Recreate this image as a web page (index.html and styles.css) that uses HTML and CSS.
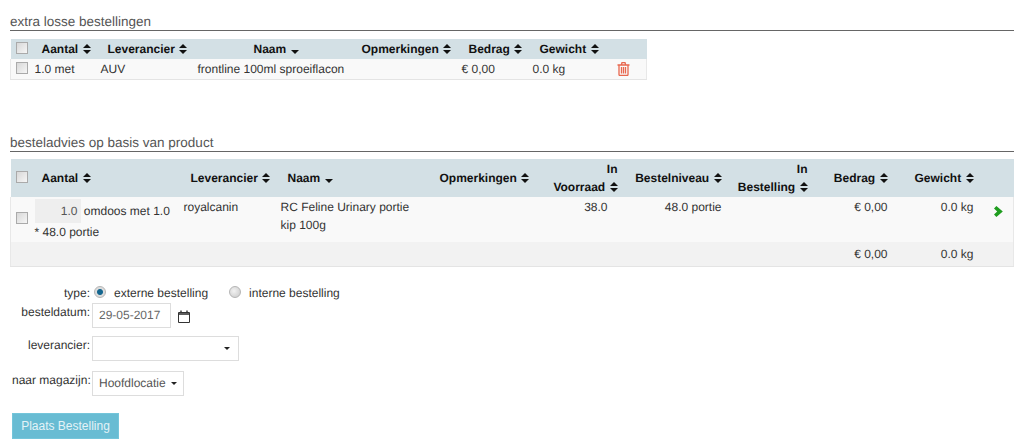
FILE: index.html
```html
<!DOCTYPE html>
<html lang="nl">
<head>
    <meta charset="UTF-8">
    <title>Bestellingen</title>
    <link rel="stylesheet" href="styles.css">
</head>
<body>
    <!-- losse bestellingen -->
    <h2 class="section-title">extra losse bestellingen</h2>
    <table class="grid grid-small">
        <colgroup>
            <col class="c-check"><col class="s-aantal"><col class="s-lev"><col class="s-naam">
            <col class="s-opm"><col class="s-bedrag"><col class="s-gewicht"><col class="s-icon">
        </colgroup>
        <thead>
            <tr>
                <th class="check"><span class="cb"></span></th>
                <th>Aantal <i class="sort"></i></th>
                <th>Leverancier <i class="sort"></i></th>
                <th class="center">Naam <i class="sort-down"></i></th>
                <th>Opmerkingen <i class="sort"></i></th>
                <th>Bedrag <i class="sort"></i></th>
                <th>Gewicht <i class="sort"></i></th>
                <th></th>
            </tr>
        </thead>
        <tbody>
            <tr>
                <td class="check"><span class="cb"></span></td>
                <td>1.0 met</td>
                <td>AUV</td>
                <td class="nowrap">frontline 100ml sproeiflacon</td>
                <td></td>
                <td>€ 0,00</td>
                <td>0.0 kg</td>
                <td class="icon-cell">
                    <svg class="trash" width="13" height="14" viewBox="0 0 13 14" fill="none" stroke="#e8674e" stroke-width="1.3">
                        <path d="M.5 3h12M2 3v9.500q0 1 1 1h7q1 0 1-1V3M4.300 3l.7-2.300h3L8.700 3"/>
                        <path d="M4.500 5v6.500M6.500 5v6.500M8.500 5v6.500"/>
                    </svg>
                </td>
            </tr>
        </tbody>
    </table>

    <!-- besteladvies -->
    <h2 class="section-title second">besteladvies op basis van product</h2>
    <table class="grid grid-large">
        <colgroup>
            <col class="c-check"><col class="l-aantal"><col class="l-lev"><col class="l-naam">
            <col class="l-opm"><col class="l-voorraad"><col class="l-niveau"><col class="l-bestelling">
            <col class="l-bedrag"><col class="l-gewicht"><col class="l-icon">
        </colgroup>
        <thead>
            <tr>
                <th class="check"><span class="cb"></span></th>
                <th>Aantal <i class="sort"></i></th>
                <th>Leverancier <i class="sort"></i></th>
                <th>Naam <i class="sort-down"></i></th>
                <th>Opmerkingen <i class="sort"></i></th>
                <th class="right">In<br>Voorraad <i class="sort"></i></th>
                <th class="right">Bestelniveau <i class="sort"></i></th>
                <th class="right">In<br>Bestelling <i class="sort"></i></th>
                <th class="right">Bedrag <i class="sort"></i></th>
                <th class="right">Gewicht <i class="sort"></i></th>
                <th></th>
            </tr>
        </thead>
        <tbody>
            <tr>
                <td class="check mid"><span class="cb"></span></td>
                <td class="amount">
                    <span class="qty">1.0</span> omdoos met 1.0<br>
                    * 48.0 portie
                </td>
                <td>royalcanin</td>
                <td>RC Feline Urinary portie<br>kip 100g</td>
                <td></td>
                <td class="right stock">38.0</td>
                <td class="right">48.0 portie</td>
                <td></td>
                <td class="right">€ 0,00</td>
                <td class="right">0.0 kg</td>
                <td class="icon-cell go">
                    <svg class="chevron" width="9" height="11" viewBox="0 0 9 11" fill="#1f9d1f"><path d="M2.400 0 8.800 5.500 2.400 11 0 8.600 3.200 5.500 0 2.400z"/></svg>
                </td>
            </tr>
        </tbody>
        <tfoot>
            <tr>
                <td colspan="8"></td>
                <td class="right">€ 0,00</td>
                <td class="right">0.0 kg</td>
                <td></td>
            </tr>
        </tfoot>
    </table>

    <!-- bestelling plaatsen -->
    <form class="order-form">
        <div class="form-row row-type">
            <label class="form-label">type:</label>
            <span class="radio on"></span><span class="radio-text">externe bestelling</span>
            <span class="radio"></span><span class="radio-text">interne bestelling</span>
        </div>
        <div class="form-row row-date">
            <label class="form-label">besteldatum:</label>
            <span class="field date">29-05-2017</span>
            <svg class="cal" width="12" height="13" viewBox="0 0 12 13" fill="none" stroke="#333" stroke-width="1">
                <path d="M.5 2.500h11v10h-11z"/>
                <path d="M.5 4h11" stroke-width="1.600"/>
                <path d="M3 .5v2M9 .5v2" stroke-width="1.400"/>
            </svg>
        </div>
        <div class="form-row row-supplier">
            <label class="form-label">leverancier:</label>
            <span class="field select wide"><i class="caret"></i></span>
        </div>
        <div class="form-row row-store">
            <label class="form-label">naar magazijn:</label>
            <span class="field select store">Hoofdlocatie<i class="caret"></i></span>
        </div>
        <button type="button" class="btn-place">Plaats Bestelling</button>
    </form>
</body>
</html>
```

FILE: styles.css
```css
body {
    margin: 0;
    padding: 0 10px;
    background: #fff;
    color: #333;
    font-family: "Liberation Sans", Arial, sans-serif;
    font-size: 12px;
    line-height: 20px;
    text-rendering: geometricPrecision;
}
.section-title {
    margin: 0;
    padding-top: 13px;
    height: 17px;
    line-height: 18px;
    border-bottom: 1px solid #666;
    font-size: 13.500px;
    font-weight: normal;
    color: #555;
}
.section-title.second {
    margin-top: 53px;
    padding-top: 1px;
}
.grid {
    border-collapse: collapse;
    table-layout: fixed;
    margin-top: 8px;
}
.grid-small {
    width: 636px;
}
.grid-large {
    width: 1003px;
    margin-top: 7px;
}
.c-check { width: 24px; }
.s-aantal { width: 66px; }
.s-lev { width: 97px; }
.s-naam { width: 157px; }
.s-opm { width: 107px; }
.s-bedrag { width: 71px; }
.s-gewicht { width: 77px; }
.s-icon { width: 37px; }
.l-aantal { width: 149px; }
.l-lev { width: 97px; }
.l-naam { width: 152px; }
.l-opm { width: 108px; }
.l-voorraad { width: 84px; }
.l-niveau { width: 104px; }
.l-bestelling { width: 86px; }
.l-bedrag { width: 80px; }
.l-gewicht { width: 86px; }
.l-icon { width: 33px; }
.grid th,
.grid td {
    box-sizing: border-box;
}
.grid th {
    background: #d3e0e5;
    color: #111;
    font-weight: bold;
    text-align: left;
    padding: 0 7px;
    height: 20px;
    white-space: nowrap;
}
.grid td {
    background: #f9f9f9;
    padding: 0;
    height: 20px;
    vertical-align: middle;
}
.grid tbody tr,
.grid tfoot tr {
    border-left: 1px solid #e8e8e8;
    border-right: 1px solid #e8e8e8;
}
.grid-small tbody tr,
.grid-large tfoot tr {
    border-bottom: 1px solid #e4e4e4;
}
.grid th.check,
.grid td.check {
    padding: 0 0 3px 5px;
}
.grid th.center {
    text-align: center;
}
.grid th.right,
.grid td.right {
    text-align: right;
    padding-right: 7px;
}
.grid td.stock {
    padding-right: 17px;
}
.grid-large th {
    height: 38px;
    line-height: 18px;
}
.grid-large tbody td {
    height: 45px;
    vertical-align: top;
    line-height: 18px;
    padding-top: 1px;
}
.grid-large td.check.mid {
    vertical-align: top;
    padding-top: 15px;
}
.grid-large td.amount {
    padding: 2px 0 0;
    white-space: nowrap;
}
.grid-large tfoot td {
    height: 24px;
    background: #f2f2f2;
}
.nowrap {
    white-space: nowrap;
}
.grid td.icon-cell {
    padding-left: 7px;
}
.grid-large tbody td.go {
    padding: 9px 0 0 13px;
}
.trash,
.chevron {
    display: block;
}
.qty {
    display: inline-block;
    width: 46px;
    height: 24px;
    line-height: 24px;
    padding-right: 3px;
    box-sizing: border-box;
    background: #eee;
    color: #555;
    text-align: right;
}
.cb {
    display: block;
    box-sizing: border-box;
    width: 12px;
    height: 12px;
    border: 1px solid #aaa;
    background: linear-gradient(135deg, #d8d8d8, #f6f6f6);
}
.sort,
.sort-down {
    display: inline-block;
    position: relative;
    width: 8px;
    height: 10px;
    margin-left: 1px;
    vertical-align: -1px;
}
.sort::before,
.sort::after,
.sort-down::after {
    content: "";
    position: absolute;
    left: 0;
    border-left: 4px solid transparent;
    border-right: 4px solid transparent;
}
.sort::before {
    top: 0;
    border-bottom: 4px solid #111;
}
.sort::after,
.sort-down::after {
    bottom: 0;
    border-top: 4px solid #111;
}
.order-form {
    margin: 16px 0 0 2px;
}
.form-row {
    display: flex;
    align-items: flex-start;
}
.form-label {
    width: 78px;
    margin-right: 2px;
    line-height: 18px;
    text-align: right;
    white-space: nowrap;
}
.row-type {
    height: 20px;
    align-items: center;
}
.row-date {
    height: 33px;
}
.row-supplier {
    height: 35px;
}
.row-store {
    height: 42px;
}
.radio {
    box-sizing: border-box;
    width: 12px;
    height: 12px;
    border-radius: 50%;
    border: 1px solid #b5b5b5;
    background: radial-gradient(circle at 40% 40%, #f2f2f2, #c8c8c8);
    margin: 0 0 1px 2px;
}
.radio.on {
    background: radial-gradient(circle, #14668f 0 2.500px, #dcdcdc 3.500px);
}
.radio-text {
    margin: 0 19px 0 8px;
}
.field {
    display: block;
    box-sizing: border-box;
    height: 25px;
    line-height: 23px;
    border: 1px solid #ddd;
    background: #fff;
    color: #666;
    padding: 0 6px;
}
.date {
    width: 79px;
}
.cal {
    margin: 7px 0 0 7px;
}
.select {
    display: flex;
    align-items: center;
    justify-content: space-between;
    color: #555;
}
.wide {
    width: 147px;
    padding-right: 8px;
    justify-content: flex-end;
}
.store {
    width: 92px;
}
.caret {
    width: 0;
    height: 0;
    margin-left: 5px;
    border-left: 3px solid transparent;
    border-right: 3px solid transparent;
    border-top: 3px solid #222;
}
.btn-place {
    display: block;
    width: 107px;
    height: 26px;
    padding: 0;
    border: 1px solid #74c5da;
    background: #68bcd3;
    color: #e4f3f7;
    font: inherit;
}
```
